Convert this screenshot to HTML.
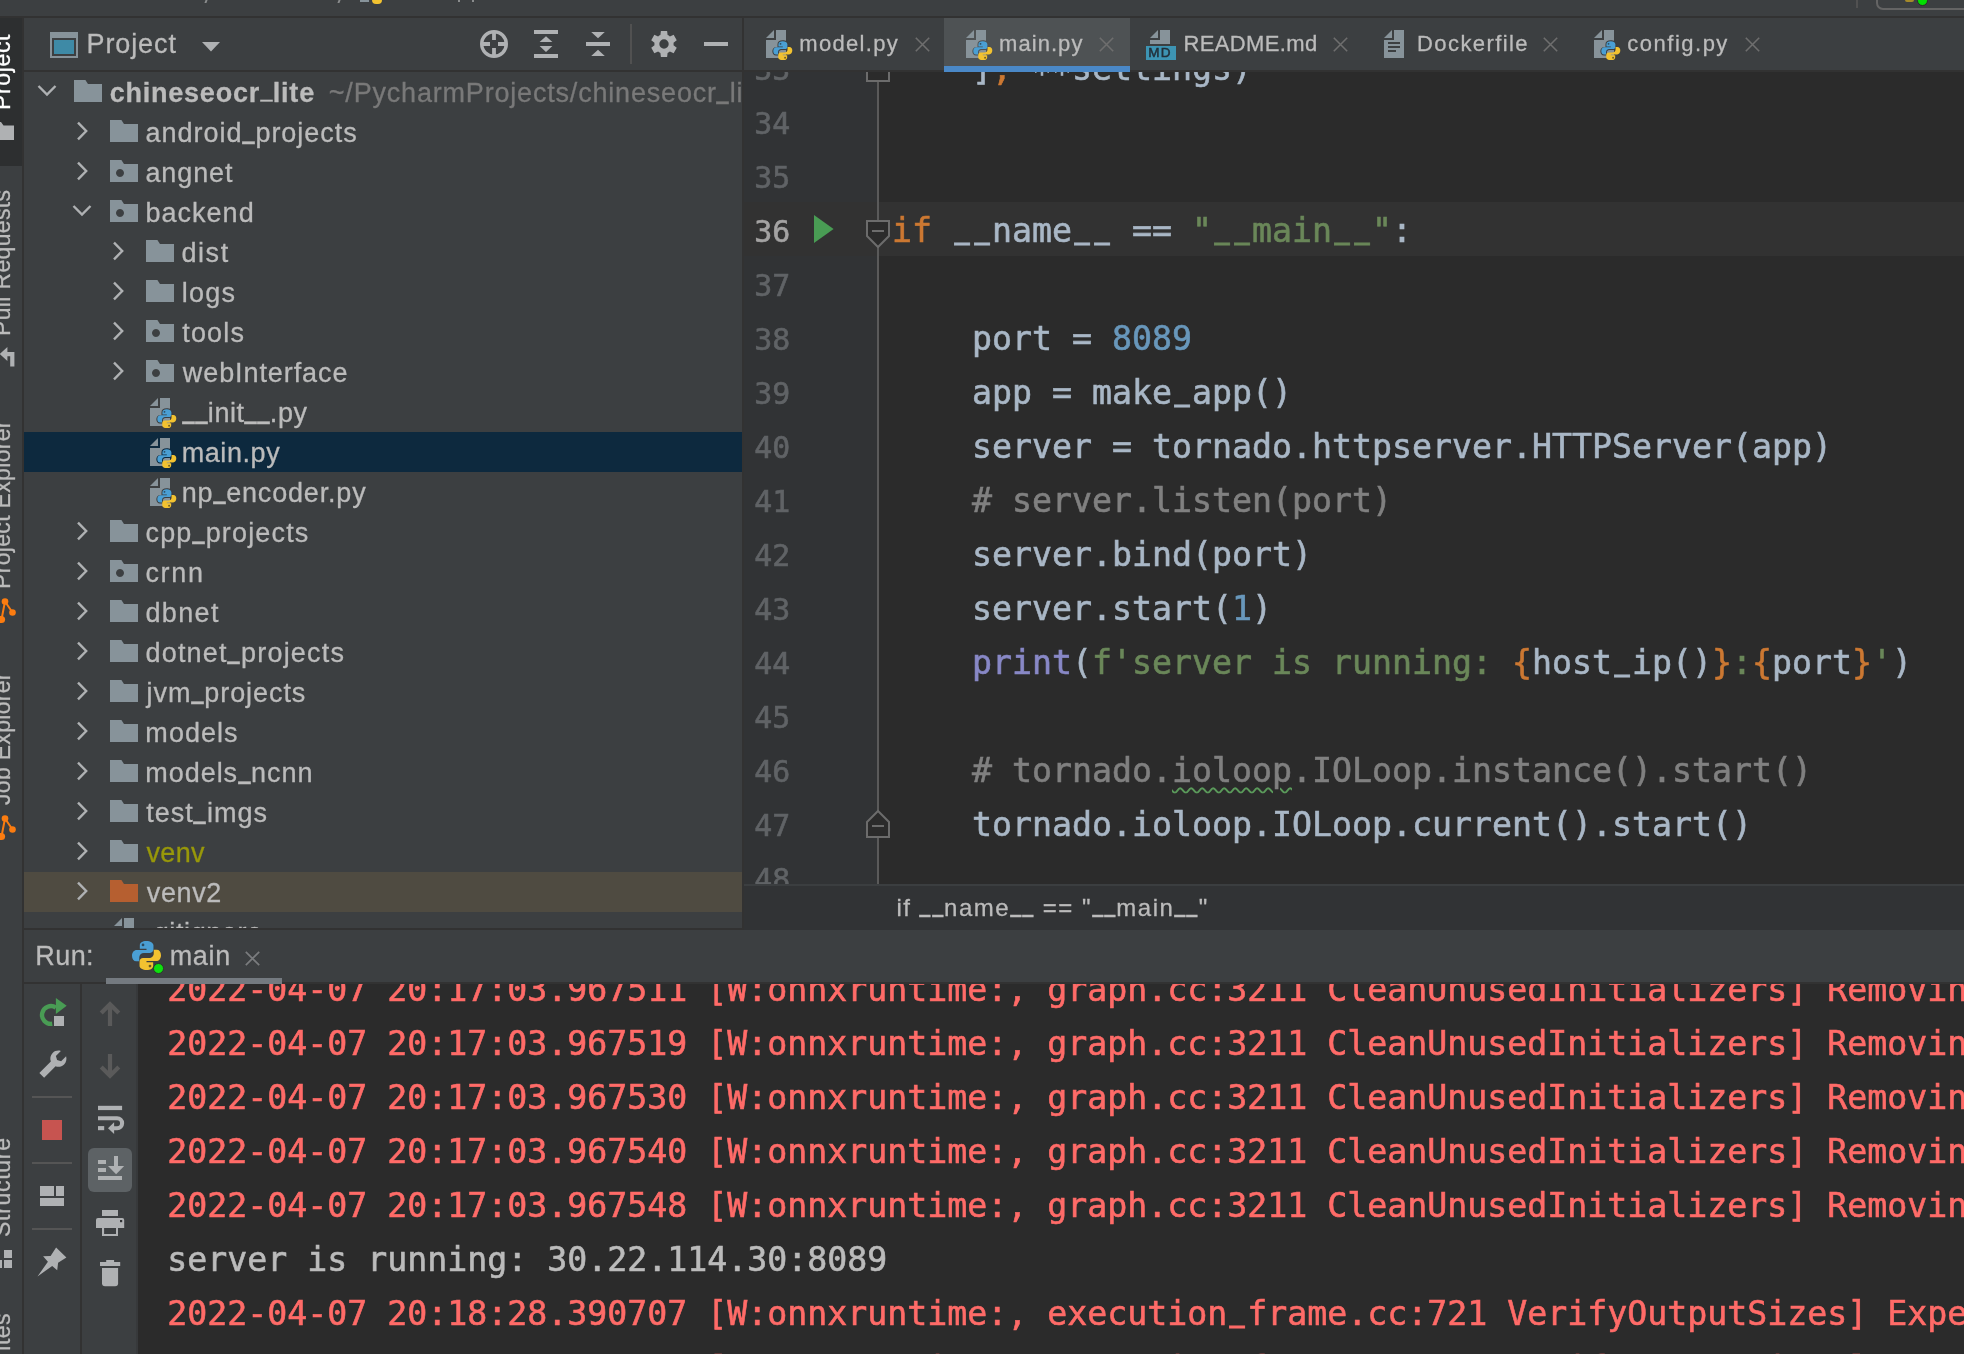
<!DOCTYPE html>
<html lang="en"><head><meta charset="utf-8"><title>chineseocr_lite – main.py</title>
<style>
html,body{margin:0;padding:0;background:#3c3f41;}
body{width:1964px;height:1354px;position:relative;overflow:hidden;}
#root{position:absolute;left:0;top:0;width:1964px;height:1354px;overflow:hidden;will-change:transform;}
.b{position:absolute;display:block;}
.t{position:absolute;white-space:pre;}
.clip{position:absolute;overflow:hidden;}
.u{display:inline-block;transform-origin:50% 100%;transform:translateY(-0.7px) scale(.78,1.5);}
.us{display:inline-block;transform-origin:50% 100%;transform:translateY(-2.5px) scale(.8,1.3);}
.as{display:inline-block;transform:translateY(5px);}
.s{font-family:"Liberation Sans","DejaVu Sans",sans-serif;-webkit-text-stroke:0.3px;}
.m{font-family:"DejaVu Sans Mono","Liberation Mono",monospace;-webkit-text-stroke:0.6px;}
</style></head><body><div id="root">
<div class="b" style="left:0px;top:0px;width:1964px;height:16px;background:#3c3f41;"></div>
<div class="b" style="left:0px;top:16px;width:1964px;height:2px;background:#323232;"></div>
<div class="b" style="left:205px;top:0px;width:2px;height:3px;background:#8a8c8d;transform:skewX(-20deg);"></div>
<div class="b" style="left:338px;top:0px;width:2px;height:3px;background:#8a8c8d;transform:skewX(-20deg);"></div>
<div class="b" style="left:360px;top:0px;width:9px;height:2px;background:#87939a;"></div>
<div class="b" style="left:371.5px;top:0px;width:10px;height:3.5px;background:#f2c230;border-radius:0 0 4px 4px;"></div>
<div class="b" style="left:458px;top:0px;width:2px;height:1.5px;background:#8a8c8d;"></div>
<div class="b" style="left:472px;top:0px;width:2px;height:2px;background:#8a8c8d;"></div>
<div class="b" style="left:1856px;top:0px;width:2px;height:8px;background:#515151;"></div>
<div class="b" style="left:1876px;top:-12px;width:120px;height:18px;border:2px solid #646464;border-radius:7px;"></div>
<div class="b" style="left:1905px;top:0px;width:9px;height:2px;background:#a58a2a;border-radius:0 0 5px 5px;"></div>
<div class="b" style="left:1917px;top:-5.5px;width:9px;height:9px;border-radius:50%;background:#00e000;border:1px solid #2b2b2b;"></div>
<div class="b" style="left:0px;top:18px;width:22px;height:148px;background:#2d2f30;"></div>
<div class="b" style="left:22px;top:18px;width:2px;height:1336px;background:#323232;"></div>
<div class="b" style="left:24px;top:70px;width:718px;height:2px;background:#323232;"></div>
<div class="b" style="left:742px;top:18px;width:2px;height:912px;background:#323232;"></div>
<svg class="b" style="left:50px;top:32px;" width="28" height="26" viewBox="0 0 28 26"><rect width="28" height="26" fill="#87939a"/><rect x="2" y="6" width="24" height="18" fill="#3c3f41"/><rect x="4" y="8" width="20" height="14" fill="#3e8aa6"/></svg>
<div class="t s" style="left:86.62px;top:27.14px;font-size:27px;line-height:35px;color:#bbbbbb;letter-spacing:0.875px;">Project</div>
<svg class="b" style="left:202px;top:42px;" width="18" height="10" viewBox="0 0 18 10"><path d="M0,0 H18 L9,9.5 Z" fill="#afb1b3"/></svg>
<div class="clip" style="left:24px;top:72px;width:718px;height:856px;">
<svg class="b" style="left:13px;top:11.5px;" width="20" height="14" viewBox="0 0 20 14"><path d="M1.5,2 L10,10.5 L18.5,2" fill="none" stroke="#afb1b3" stroke-width="2.4"/></svg>
<svg class="b" style="left:50px;top:8px;" width="28" height="22" viewBox="0 0 28 22"><path d="M0,22 H28 V4 H13.97 L11.39,0 H0 Z" fill="#87939a" fill-rule="evenodd"/></svg>
<div class="t s" style="left:85.70px;top:4.14px;font-size:27px;line-height:35px;color:#bbbbbb;font-weight:bold;letter-spacing:0.775px;">chineseocr<span class="us" style="margin:0 -1.50px">_</span>lite</div>
<svg class="b" style="left:52px;top:48.7px;" width="14" height="20" viewBox="0 0 14 20"><path d="M2,1.7 L10.2,10 L2,18.3" fill="none" stroke="#afb1b3" stroke-width="2.4"/></svg>
<svg class="b" style="left:86px;top:48px;" width="28" height="22" viewBox="0 0 28 22"><path d="M0,22 H28 V4 H13.97 L11.39,0 H0 Z" fill="#87939a" fill-rule="evenodd"/></svg>
<div class="t s" style="left:121.47px;top:44.14px;font-size:27px;line-height:35px;color:#bbbbbb;letter-spacing:0.978px;">android<span class="us" style="margin:0 -1.50px">_</span>projects</div>
<svg class="b" style="left:52px;top:88.7px;" width="14" height="20" viewBox="0 0 14 20"><path d="M2,1.7 L10.2,10 L2,18.3" fill="none" stroke="#afb1b3" stroke-width="2.4"/></svg>
<svg class="b" style="left:86px;top:88px;" width="28" height="22" viewBox="0 0 28 22"><path d="M0,22 H28 V4 H13.97 L11.39,0 H0 Z M10,9 a4,4 0 1,0 0.001,0 Z" fill="#87939a" fill-rule="evenodd"/></svg>
<div class="t s" style="left:121.47px;top:84.14px;font-size:27px;line-height:35px;color:#bbbbbb;letter-spacing:0.885px;">angnet</div>
<svg class="b" style="left:48px;top:131.5px;" width="20" height="14" viewBox="0 0 20 14"><path d="M1.5,2 L10,10.5 L18.5,2" fill="none" stroke="#afb1b3" stroke-width="2.4"/></svg>
<svg class="b" style="left:86px;top:128px;" width="28" height="22" viewBox="0 0 28 22"><path d="M0,22 H28 V4 H13.97 L11.39,0 H0 Z M10,9 a4,4 0 1,0 0.001,0 Z" fill="#87939a" fill-rule="evenodd"/></svg>
<div class="t s" style="left:121.47px;top:124.14px;font-size:27px;line-height:35px;color:#bbbbbb;letter-spacing:1.021px;">backend</div>
<svg class="b" style="left:88px;top:168.7px;" width="14" height="20" viewBox="0 0 14 20"><path d="M2,1.7 L10.2,10 L2,18.3" fill="none" stroke="#afb1b3" stroke-width="2.4"/></svg>
<svg class="b" style="left:122px;top:168px;" width="28" height="22" viewBox="0 0 28 22"><path d="M0,22 H28 V4 H13.97 L11.39,0 H0 Z" fill="#87939a" fill-rule="evenodd"/></svg>
<div class="t s" style="left:157.57px;top:164.14px;font-size:27px;line-height:35px;color:#bbbbbb;letter-spacing:1.517px;">dist</div>
<svg class="b" style="left:88px;top:208.7px;" width="14" height="20" viewBox="0 0 14 20"><path d="M2,1.7 L10.2,10 L2,18.3" fill="none" stroke="#afb1b3" stroke-width="2.4"/></svg>
<svg class="b" style="left:122px;top:208px;" width="28" height="22" viewBox="0 0 28 22"><path d="M0,22 H28 V4 H13.97 L11.39,0 H0 Z" fill="#87939a" fill-rule="evenodd"/></svg>
<div class="t s" style="left:157.75px;top:204.14px;font-size:27px;line-height:35px;color:#bbbbbb;letter-spacing:1.275px;">logs</div>
<svg class="b" style="left:88px;top:248.7px;" width="14" height="20" viewBox="0 0 14 20"><path d="M2,1.7 L10.2,10 L2,18.3" fill="none" stroke="#afb1b3" stroke-width="2.4"/></svg>
<svg class="b" style="left:122px;top:248px;" width="28" height="22" viewBox="0 0 28 22"><path d="M0,22 H28 V4 H13.97 L11.39,0 H0 Z M10,9 a4,4 0 1,0 0.001,0 Z" fill="#87939a" fill-rule="evenodd"/></svg>
<div class="t s" style="left:158.32px;top:244.14px;font-size:27px;line-height:35px;color:#bbbbbb;letter-spacing:1.137px;">tools</div>
<svg class="b" style="left:88px;top:288.7px;" width="14" height="20" viewBox="0 0 14 20"><path d="M2,1.7 L10.2,10 L2,18.3" fill="none" stroke="#afb1b3" stroke-width="2.4"/></svg>
<svg class="b" style="left:122px;top:288px;" width="28" height="22" viewBox="0 0 28 22"><path d="M0,22 H28 V4 H13.97 L11.39,0 H0 Z M10,9 a4,4 0 1,0 0.001,0 Z" fill="#87939a" fill-rule="evenodd"/></svg>
<div class="t s" style="left:158.82px;top:284.14px;font-size:27px;line-height:35px;color:#bbbbbb;letter-spacing:0.916px;">webInterface</div>
<svg class="b" style="left:122px;top:324px;" width="32" height="32" viewBox="0 0 32 32"><path d="M4,10 L12,2 V10 Z" fill="#87939a"/><path d="M14,2 H24 V30 H4 V12 H14 Z" fill="#87939a"/><g transform="translate(11.3,13.3) scale(0.95)">
<path d="M9.9,-1 C6.5,-1 4.4,0.6 4.4,3 V6.2 H2.6 C0.4,6.2 -1,8 -1,10.4 C-1,13 0.5,15 2.8,15 H6 V11.6 C6,10.2 7,9.2 8.4,9.2 H12.6 C14.4,9.2 15.8,7.8 15.8,6 V3 C15.8,0.6 13.2,-1 9.9,-1 Z" fill="#3c3f41"/>
<path d="M9.9,0 C7.2,0 5.4,1.2 5.4,3 V5.4 H10 V6.2 H3.3 C1.4,6.2 0,7.8 0,10.2 C0,12.6 1.2,14 3,14 H5 V11.4 C5,9.6 6.4,8.2 8.2,8.2 H12.4 C13.8,8.2 14.8,7.1 14.8,5.7 V3 C14.8,1.3 12.6,0 9.9,0 Z" fill="#4a9fd4"/>
<circle cx="7.6" cy="2.7" r="0.95" fill="#2d4a5e"/>
<path d="M10.1,20 C12.8,20 14.6,18.8 14.6,17 V14.6 H10 V13.8 H16.7 C18.6,13.8 20,12.2 20,9.8 C20,7.4 18.8,6 17,6 H15 V8.6 C15,10.4 13.6,11.8 11.8,11.8 H7.6 C6.2,11.8 5.2,12.9 5.2,14.3 V17 C5.2,18.7 7.4,20 10.1,20 Z" fill="#f2c230"/>
<circle cx="12.4" cy="17.3" r="0.95" fill="#6b5a1e"/>
</g></svg>
<div class="t s" style="left:158.60px;top:324.14px;font-size:27px;line-height:35px;color:#bbbbbb;letter-spacing:0.578px;"><span class="us" style="margin:0 -1.50px">_</span><span class="us" style="margin:0 -1.50px">_</span>init<span class="us" style="margin:0 -1.50px">_</span><span class="us" style="margin:0 -1.50px">_</span>.py</div>
<div class="b" style="left:0px;top:360px;width:718px;height:40px;background:#0d293e;"></div>
<svg class="b" style="left:122px;top:364px;" width="32" height="32" viewBox="0 0 32 32"><path d="M4,10 L12,2 V10 Z" fill="#87939a"/><path d="M14,2 H24 V30 H4 V12 H14 Z" fill="#87939a"/><g transform="translate(11.3,13.3) scale(0.95)">
<path d="M9.9,-1 C6.5,-1 4.4,0.6 4.4,3 V6.2 H2.6 C0.4,6.2 -1,8 -1,10.4 C-1,13 0.5,15 2.8,15 H6 V11.6 C6,10.2 7,9.2 8.4,9.2 H12.6 C14.4,9.2 15.8,7.8 15.8,6 V3 C15.8,0.6 13.2,-1 9.9,-1 Z" fill="#0d293e"/>
<path d="M9.9,0 C7.2,0 5.4,1.2 5.4,3 V5.4 H10 V6.2 H3.3 C1.4,6.2 0,7.8 0,10.2 C0,12.6 1.2,14 3,14 H5 V11.4 C5,9.6 6.4,8.2 8.2,8.2 H12.4 C13.8,8.2 14.8,7.1 14.8,5.7 V3 C14.8,1.3 12.6,0 9.9,0 Z" fill="#4a9fd4"/>
<circle cx="7.6" cy="2.7" r="0.95" fill="#2d4a5e"/>
<path d="M10.1,20 C12.8,20 14.6,18.8 14.6,17 V14.6 H10 V13.8 H16.7 C18.6,13.8 20,12.2 20,9.8 C20,7.4 18.8,6 17,6 H15 V8.6 C15,10.4 13.6,11.8 11.8,11.8 H7.6 C6.2,11.8 5.2,12.9 5.2,14.3 V17 C5.2,18.7 7.4,20 10.1,20 Z" fill="#f2c230"/>
<circle cx="12.4" cy="17.3" r="0.95" fill="#6b5a1e"/>
</g></svg>
<div class="t s" style="left:157.65px;top:364.14px;font-size:27px;line-height:35px;color:#bbbbbb;letter-spacing:0.592px;">main.py</div>
<svg class="b" style="left:122px;top:404px;" width="32" height="32" viewBox="0 0 32 32"><path d="M4,10 L12,2 V10 Z" fill="#87939a"/><path d="M14,2 H24 V30 H4 V12 H14 Z" fill="#87939a"/><g transform="translate(11.3,13.3) scale(0.95)">
<path d="M9.9,-1 C6.5,-1 4.4,0.6 4.4,3 V6.2 H2.6 C0.4,6.2 -1,8 -1,10.4 C-1,13 0.5,15 2.8,15 H6 V11.6 C6,10.2 7,9.2 8.4,9.2 H12.6 C14.4,9.2 15.8,7.8 15.8,6 V3 C15.8,0.6 13.2,-1 9.9,-1 Z" fill="#3c3f41"/>
<path d="M9.9,0 C7.2,0 5.4,1.2 5.4,3 V5.4 H10 V6.2 H3.3 C1.4,6.2 0,7.8 0,10.2 C0,12.6 1.2,14 3,14 H5 V11.4 C5,9.6 6.4,8.2 8.2,8.2 H12.4 C13.8,8.2 14.8,7.1 14.8,5.7 V3 C14.8,1.3 12.6,0 9.9,0 Z" fill="#4a9fd4"/>
<circle cx="7.6" cy="2.7" r="0.95" fill="#2d4a5e"/>
<path d="M10.1,20 C12.8,20 14.6,18.8 14.6,17 V14.6 H10 V13.8 H16.7 C18.6,13.8 20,12.2 20,9.8 C20,7.4 18.8,6 17,6 H15 V8.6 C15,10.4 13.6,11.8 11.8,11.8 H7.6 C6.2,11.8 5.2,12.9 5.2,14.3 V17 C5.2,18.7 7.4,20 10.1,20 Z" fill="#f2c230"/>
<circle cx="12.4" cy="17.3" r="0.95" fill="#6b5a1e"/>
</g></svg>
<div class="t s" style="left:157.65px;top:404.14px;font-size:27px;line-height:35px;color:#bbbbbb;letter-spacing:0.827px;">np<span class="us" style="margin:0 -1.50px">_</span>encoder.py</div>
<svg class="b" style="left:52px;top:448.7px;" width="14" height="20" viewBox="0 0 14 20"><path d="M2,1.7 L10.2,10 L2,18.3" fill="none" stroke="#afb1b3" stroke-width="2.4"/></svg>
<svg class="b" style="left:86px;top:448px;" width="28" height="22" viewBox="0 0 28 22"><path d="M0,22 H28 V4 H13.97 L11.39,0 H0 Z" fill="#87939a" fill-rule="evenodd"/></svg>
<div class="t s" style="left:121.47px;top:444.14px;font-size:27px;line-height:35px;color:#bbbbbb;letter-spacing:1.162px;">cpp<span class="us" style="margin:0 -1.50px">_</span>projects</div>
<svg class="b" style="left:52px;top:488.7px;" width="14" height="20" viewBox="0 0 14 20"><path d="M2,1.7 L10.2,10 L2,18.3" fill="none" stroke="#afb1b3" stroke-width="2.4"/></svg>
<svg class="b" style="left:86px;top:488px;" width="28" height="22" viewBox="0 0 28 22"><path d="M0,22 H28 V4 H13.97 L11.39,0 H0 Z M10,9 a4,4 0 1,0 0.001,0 Z" fill="#87939a" fill-rule="evenodd"/></svg>
<div class="t s" style="left:121.47px;top:484.14px;font-size:27px;line-height:35px;color:#bbbbbb;letter-spacing:1.650px;">crnn</div>
<svg class="b" style="left:52px;top:528.7px;" width="14" height="20" viewBox="0 0 14 20"><path d="M2,1.7 L10.2,10 L2,18.3" fill="none" stroke="#afb1b3" stroke-width="2.4"/></svg>
<svg class="b" style="left:86px;top:528px;" width="28" height="22" viewBox="0 0 28 22"><path d="M0,22 H28 V4 H13.97 L11.39,0 H0 Z" fill="#87939a" fill-rule="evenodd"/></svg>
<div class="t s" style="left:121.47px;top:524.14px;font-size:27px;line-height:35px;color:#bbbbbb;letter-spacing:1.356px;">dbnet</div>
<svg class="b" style="left:52px;top:568.7px;" width="14" height="20" viewBox="0 0 14 20"><path d="M2,1.7 L10.2,10 L2,18.3" fill="none" stroke="#afb1b3" stroke-width="2.4"/></svg>
<svg class="b" style="left:86px;top:568px;" width="28" height="22" viewBox="0 0 28 22"><path d="M0,22 H28 V4 H13.97 L11.39,0 H0 Z" fill="#87939a" fill-rule="evenodd"/></svg>
<div class="t s" style="left:121.47px;top:564.14px;font-size:27px;line-height:35px;color:#bbbbbb;letter-spacing:1.206px;">dotnet<span class="us" style="margin:0 -1.50px">_</span>projects</div>
<svg class="b" style="left:52px;top:608.7px;" width="14" height="20" viewBox="0 0 14 20"><path d="M2,1.7 L10.2,10 L2,18.3" fill="none" stroke="#afb1b3" stroke-width="2.4"/></svg>
<svg class="b" style="left:86px;top:608px;" width="28" height="22" viewBox="0 0 28 22"><path d="M0,22 H28 V4 H13.97 L11.39,0 H0 Z" fill="#87939a" fill-rule="evenodd"/></svg>
<div class="t s" style="left:122.55px;top:604.14px;font-size:27px;line-height:35px;color:#bbbbbb;letter-spacing:0.930px;">jvm<span class="us" style="margin:0 -1.50px">_</span>projects</div>
<svg class="b" style="left:52px;top:648.7px;" width="14" height="20" viewBox="0 0 14 20"><path d="M2,1.7 L10.2,10 L2,18.3" fill="none" stroke="#afb1b3" stroke-width="2.4"/></svg>
<svg class="b" style="left:86px;top:648px;" width="28" height="22" viewBox="0 0 28 22"><path d="M0,22 H28 V4 H13.97 L11.39,0 H0 Z" fill="#87939a" fill-rule="evenodd"/></svg>
<div class="t s" style="left:121.35px;top:644.14px;font-size:27px;line-height:35px;color:#bbbbbb;letter-spacing:1.045px;">models</div>
<svg class="b" style="left:52px;top:688.7px;" width="14" height="20" viewBox="0 0 14 20"><path d="M2,1.7 L10.2,10 L2,18.3" fill="none" stroke="#afb1b3" stroke-width="2.4"/></svg>
<svg class="b" style="left:86px;top:688px;" width="28" height="22" viewBox="0 0 28 22"><path d="M0,22 H28 V4 H13.97 L11.39,0 H0 Z" fill="#87939a" fill-rule="evenodd"/></svg>
<div class="t s" style="left:121.35px;top:684.14px;font-size:27px;line-height:35px;color:#bbbbbb;letter-spacing:0.945px;">models<span class="us" style="margin:0 -1.50px">_</span>ncnn</div>
<svg class="b" style="left:52px;top:728.7px;" width="14" height="20" viewBox="0 0 14 20"><path d="M2,1.7 L10.2,10 L2,18.3" fill="none" stroke="#afb1b3" stroke-width="2.4"/></svg>
<svg class="b" style="left:86px;top:728px;" width="28" height="22" viewBox="0 0 28 22"><path d="M0,22 H28 V4 H13.97 L11.39,0 H0 Z" fill="#87939a" fill-rule="evenodd"/></svg>
<div class="t s" style="left:122.22px;top:724.14px;font-size:27px;line-height:35px;color:#bbbbbb;letter-spacing:1.019px;">test<span class="us" style="margin:0 -1.50px">_</span>imgs</div>
<svg class="b" style="left:52px;top:768.7px;" width="14" height="20" viewBox="0 0 14 20"><path d="M2,1.7 L10.2,10 L2,18.3" fill="none" stroke="#afb1b3" stroke-width="2.4"/></svg>
<svg class="b" style="left:86px;top:768px;" width="28" height="22" viewBox="0 0 28 22"><path d="M0,22 H28 V4 H13.97 L11.39,0 H0 Z" fill="#87939a" fill-rule="evenodd"/></svg>
<div class="t s" style="left:122.60px;top:764.14px;font-size:27px;line-height:35px;color:#98980a;letter-spacing:0.267px;">venv</div>
<div class="b" style="left:0px;top:800px;width:718px;height:40px;background:#4f4b41;"></div>
<svg class="b" style="left:52px;top:808.7px;" width="14" height="20" viewBox="0 0 14 20"><path d="M2,1.7 L10.2,10 L2,18.3" fill="none" stroke="#afb1b3" stroke-width="2.4"/></svg>
<svg class="b" style="left:86px;top:808px;" width="28" height="22" viewBox="0 0 28 22"><path d="M0,22 H28 V4 H13.97 L11.39,0 H0 Z" fill="#b65f30" fill-rule="evenodd"/></svg>
<div class="t s" style="left:122.80px;top:804.14px;font-size:27px;line-height:35px;color:#bbbbbb;letter-spacing:0.613px;">venv2</div>
<div class="t s" style="left:304.77px;top:4.14px;font-size:27px;line-height:35px;color:#797979;letter-spacing:0.810px;">~/PycharmProjects/chineseocr<span class="us" style="margin:0 -1.50px">_</span>lite</div>
<svg class="b" style="left:86px;top:844px;" width="32" height="32" viewBox="0 0 32 32"><path d="M4,10 L12,2 V10 Z" fill="#87939a"/><path d="M14,2 H24 V30 H4 V12 H14 Z" fill="#87939a"/></svg>
<div class="t s" style="left:121.62px;top:844.14px;font-size:27px;line-height:35px;color:#bbbbbb;letter-spacing:0.600px;">.gitignore</div>
</div>
<div class="b" style="left:24px;top:928px;width:718px;height:2px;background:#323232;"></div>
<svg class="b" style="left:480px;top:30px;" width="28" height="28" viewBox="0 0 28 28"><circle cx="14" cy="14" r="12.3" fill="none" stroke="#afb1b3" stroke-width="3.4"/><path d="M14,1 V10 M14,18 V27 M1,14 H10 M18,14 H27" stroke="#afb1b3" stroke-width="3.8"/></svg>
<svg class="b" style="left:534px;top:30px;" width="24" height="28" viewBox="0 0 24 28"><rect x="0" y="0" width="24" height="4" fill="#afb1b3"/><rect x="0" y="24" width="24" height="4" fill="#afb1b3"/><path d="M12,6.2 L18.4,12 H5.6 Z M12,22 L18.4,16 H5.6 Z" fill="#afb1b3"/></svg>
<svg class="b" style="left:586px;top:30px;" width="24" height="28" viewBox="0 0 24 28"><rect x="0" y="12" width="24" height="4" fill="#afb1b3"/><path d="M12,8.2 L18.8,2 H5.2 Z M12,19.8 L18.8,26 H5.2 Z" fill="#afb1b3"/></svg>
<div class="b" style="left:630px;top:24px;width:2px;height:40px;background:#515151;"></div>
<svg class="b" style="left:650px;top:30px;" width="28" height="28" viewBox="0 0 28 28"><path d="M10.40,5.10 L10.40,5.10 L10.90,1.07 L17.10,1.07 L17.60,5.10 A9.60,9.60 0 0 1 19.91,6.44 L19.91,6.44 L23.65,4.84 L26.75,10.22 L23.51,12.66 A9.60,9.60 0 0 1 23.51,15.34 L23.51,15.34 L26.75,17.78 L23.65,23.16 L19.91,21.56 A9.60,9.60 0 0 1 17.60,22.90 L17.60,22.90 L17.10,26.93 L10.90,26.93 L10.40,22.90 A9.60,9.60 0 0 1 8.09,21.56 L8.09,21.56 L4.35,23.16 L1.25,17.78 L4.49,15.34 A9.60,9.60 0 0 1 4.49,12.66 L4.49,12.66 L1.25,10.22 L4.35,4.84 L8.09,6.44 A9.60,9.60 0 0 1 10.40,5.10 Z M9.30,14.00 a4.70,4.70 0 1,0 9.40,0 a4.70,4.70 0 1,0 -9.40,0 Z" fill="#afb1b3" fill-rule="evenodd"/></svg>
<div class="b" style="left:704px;top:42px;width:24px;height:4px;background:#afb1b3;"></div>
<div class="clip" style="left:0;top:18px;width:22px;height:1336px;">
<div class="t s" style="left:-12.77px;top:91.88px;font-size:23px;line-height:30px;color:#ffffff;transform-origin:0 0;transform:rotate(-90deg);letter-spacing:0.646px;">Project</div>
<svg class="b" style="left:-14px;top:104px;" width="28" height="18" viewBox="0 0 28 18"><path d="M0,18 H28 V3.5 H17.5 L15,0 H0 Z" fill="#afb1b3"/></svg>
<div class="t s" style="left:-12.87px;top:318.18px;font-size:23px;line-height:30px;color:#bbbbbb;transform-origin:0 0;transform:rotate(-90deg);letter-spacing:0.338px;">Pull Requests</div>
<svg class="b" style="left:0px;top:329px;" width="15" height="21" viewBox="0 0 15 21"><path d="M-0.4,7 L7.4,0 V5 H14.4 V19.6 H10.2 V9.2 H7.4 V14 Z" fill="#afb1b3"/></svg>
<div class="t s" style="left:-12.87px;top:571.48px;font-size:23px;line-height:30px;color:#bbbbbb;transform-origin:0 0;transform:rotate(-90deg);letter-spacing:0.327px;">Project Explorer</div>
<svg class="b" style="left:-6px;top:579px;" width="24" height="30" viewBox="0 0 24 30"><path d="M11,4.5 L18.5,15.5 M11,4.5 L7.5,22.5" stroke="#fb7c10" stroke-width="2" fill="none"/><circle cx="11" cy="4.5" r="3.3" fill="#fb7c10"/><circle cx="18.5" cy="15.5" r="3.3" fill="#fb7c10"/><circle cx="7.5" cy="22.5" r="3.6" fill="#fb7c10"/></svg>
<div class="t s" style="left:-12.87px;top:786.85px;font-size:23px;line-height:30px;color:#bbbbbb;transform-origin:0 0;transform:rotate(-90deg);letter-spacing:0.307px;">Job Explorer</div>
<svg class="b" style="left:-6px;top:795.5px;" width="24" height="30" viewBox="0 0 24 30"><path d="M11,4.5 L18.5,15.5 M11,4.5 L7.5,22.5" stroke="#fb7c10" stroke-width="2" fill="none"/><circle cx="11" cy="4.5" r="3.3" fill="#fb7c10"/><circle cx="18.5" cy="15.5" r="3.3" fill="#fb7c10"/><circle cx="7.5" cy="22.5" r="3.6" fill="#fb7c10"/></svg>
<div class="t s" style="left:-12.87px;top:1219.00px;font-size:23px;line-height:30px;color:#bbbbbb;transform-origin:0 0;transform:rotate(-90deg);letter-spacing:0.703px;">Structure</div>
<svg class="b" style="left:0px;top:1232px;" width="12" height="18" viewBox="0 0 12 18"><rect x="4" y="0" width="8" height="8" fill="#afb1b3"/><rect x="4" y="10" width="8" height="8" fill="#afb1b3"/><rect x="-6" y="10" width="8" height="8" fill="#afb1b3"/></svg>
<div class="t s" style="left:-12.87px;top:1393.88px;font-size:23px;line-height:30px;color:#bbbbbb;transform-origin:0 0;transform:rotate(-90deg);letter-spacing:0.500px;">Favorites</div>
</div>
<div class="b" style="left:944px;top:18px;width:186px;height:52px;background:#4e5254;"></div>
<div class="b" style="left:744px;top:70px;width:1220px;height:2px;background:#323232;"></div>
<div class="b" style="left:944px;top:66px;width:186px;height:6px;background:#4a88c7;"></div>
<svg class="b" style="left:762px;top:28px;" width="32" height="32" viewBox="0 0 32 32"><path d="M4,10 L12,2 V10 Z" fill="#87939a"/><path d="M14,2 H24 V30 H4 V12 H14 Z" fill="#87939a"/><g transform="translate(11.3,13.3) scale(0.95)">
<path d="M9.9,-1 C6.5,-1 4.4,0.6 4.4,3 V6.2 H2.6 C0.4,6.2 -1,8 -1,10.4 C-1,13 0.5,15 2.8,15 H6 V11.6 C6,10.2 7,9.2 8.4,9.2 H12.6 C14.4,9.2 15.8,7.8 15.8,6 V3 C15.8,0.6 13.2,-1 9.9,-1 Z" fill="#3c3f41"/>
<path d="M9.9,0 C7.2,0 5.4,1.2 5.4,3 V5.4 H10 V6.2 H3.3 C1.4,6.2 0,7.8 0,10.2 C0,12.6 1.2,14 3,14 H5 V11.4 C5,9.6 6.4,8.2 8.2,8.2 H12.4 C13.8,8.2 14.8,7.1 14.8,5.7 V3 C14.8,1.3 12.6,0 9.9,0 Z" fill="#4a9fd4"/>
<circle cx="7.6" cy="2.7" r="0.95" fill="#2d4a5e"/>
<path d="M10.1,20 C12.8,20 14.6,18.8 14.6,17 V14.6 H10 V13.8 H16.7 C18.6,13.8 20,12.2 20,9.8 C20,7.4 18.8,6 17,6 H15 V8.6 C15,10.4 13.6,11.8 11.8,11.8 H7.6 C6.2,11.8 5.2,12.9 5.2,14.3 V17 C5.2,18.7 7.4,20 10.1,20 Z" fill="#f2c230"/>
<circle cx="12.4" cy="17.3" r="0.95" fill="#6b5a1e"/>
</g></svg>
<div class="t s" style="left:799.23px;top:29.37px;font-size:22px;line-height:29px;color:#bbbbbb;letter-spacing:1.332px;">model.py</div>
<svg class="b" style="left:914.5px;top:37px;" width="15" height="15" viewBox="0 0 15 15"><path d="M0.8,0.8 L14.2,14.2 M14.2,0.8 L0.8,14.2" stroke="#6e6e6e" stroke-width="1.6" fill="none"/></svg>
<svg class="b" style="left:962px;top:28px;" width="32" height="32" viewBox="0 0 32 32"><path d="M4,10 L12,2 V10 Z" fill="#87939a"/><path d="M14,2 H24 V30 H4 V12 H14 Z" fill="#87939a"/><g transform="translate(11.3,13.3) scale(0.95)">
<path d="M9.9,-1 C6.5,-1 4.4,0.6 4.4,3 V6.2 H2.6 C0.4,6.2 -1,8 -1,10.4 C-1,13 0.5,15 2.8,15 H6 V11.6 C6,10.2 7,9.2 8.4,9.2 H12.6 C14.4,9.2 15.8,7.8 15.8,6 V3 C15.8,0.6 13.2,-1 9.9,-1 Z" fill="#4e5254"/>
<path d="M9.9,0 C7.2,0 5.4,1.2 5.4,3 V5.4 H10 V6.2 H3.3 C1.4,6.2 0,7.8 0,10.2 C0,12.6 1.2,14 3,14 H5 V11.4 C5,9.6 6.4,8.2 8.2,8.2 H12.4 C13.8,8.2 14.8,7.1 14.8,5.7 V3 C14.8,1.3 12.6,0 9.9,0 Z" fill="#4a9fd4"/>
<circle cx="7.6" cy="2.7" r="0.95" fill="#2d4a5e"/>
<path d="M10.1,20 C12.8,20 14.6,18.8 14.6,17 V14.6 H10 V13.8 H16.7 C18.6,13.8 20,12.2 20,9.8 C20,7.4 18.8,6 17,6 H15 V8.6 C15,10.4 13.6,11.8 11.8,11.8 H7.6 C6.2,11.8 5.2,12.9 5.2,14.3 V17 C5.2,18.7 7.4,20 10.1,20 Z" fill="#f2c230"/>
<circle cx="12.4" cy="17.3" r="0.95" fill="#6b5a1e"/>
</g></svg>
<div class="t s" style="left:999.02px;top:29.37px;font-size:22px;line-height:29px;color:#bbbbbb;letter-spacing:1.062px;">main.py</div>
<svg class="b" style="left:1098.5px;top:37px;" width="15" height="15" viewBox="0 0 15 15"><path d="M0.8,0.8 L14.2,14.2 M14.2,0.8 L0.8,14.2" stroke="#6e6e6e" stroke-width="1.6" fill="none"/></svg>
<svg class="b" style="left:1144px;top:28px;" width="32" height="32" viewBox="0 0 32 32"><path d="M6,10 L14,2 V10 Z" fill="#87939a"/><path d="M16,2 H26 V16 H6 V12 H16 Z" fill="#87939a"/><rect x="2" y="18" width="30" height="14" fill="#3d94b3"/></svg>
<div class="t s" style="left:1148.20px;top:43.92px;font-size:13.5px;line-height:18px;color:#22303a;letter-spacing:1.425px;-webkit-text-stroke:0.5px;">MD</div>
<div class="t s" style="left:1183.45px;top:29.37px;font-size:22px;line-height:29px;color:#bbbbbb;letter-spacing:0.381px;">README.md</div>
<svg class="b" style="left:1332.5px;top:37px;" width="15" height="15" viewBox="0 0 15 15"><path d="M0.8,0.8 L14.2,14.2 M14.2,0.8 L0.8,14.2" stroke="#6e6e6e" stroke-width="1.6" fill="none"/></svg>
<svg class="b" style="left:1378px;top:28px;" width="32" height="32" viewBox="0 0 32 32"><path d="M6,10 L14,2 V10 Z" fill="#87939a"/><path d="M16,2 H26 V30 H6 V12 H16 Z" fill="#87939a"/><path d="M10,15 H22 M10,19 H22 M10,23 H18" stroke="#3c3f41" stroke-width="2"/></svg>
<div class="t s" style="left:1417.05px;top:29.37px;font-size:22px;line-height:29px;color:#bbbbbb;letter-spacing:1.417px;">Dockerfile</div>
<svg class="b" style="left:1542.5px;top:37px;" width="15" height="15" viewBox="0 0 15 15"><path d="M0.8,0.8 L14.2,14.2 M14.2,0.8 L0.8,14.2" stroke="#6e6e6e" stroke-width="1.6" fill="none"/></svg>
<svg class="b" style="left:1590px;top:28px;" width="32" height="32" viewBox="0 0 32 32"><path d="M4,10 L12,2 V10 Z" fill="#87939a"/><path d="M14,2 H24 V30 H4 V12 H14 Z" fill="#87939a"/><g transform="translate(11.3,13.3) scale(0.95)">
<path d="M9.9,-1 C6.5,-1 4.4,0.6 4.4,3 V6.2 H2.6 C0.4,6.2 -1,8 -1,10.4 C-1,13 0.5,15 2.8,15 H6 V11.6 C6,10.2 7,9.2 8.4,9.2 H12.6 C14.4,9.2 15.8,7.8 15.8,6 V3 C15.8,0.6 13.2,-1 9.9,-1 Z" fill="#3c3f41"/>
<path d="M9.9,0 C7.2,0 5.4,1.2 5.4,3 V5.4 H10 V6.2 H3.3 C1.4,6.2 0,7.8 0,10.2 C0,12.6 1.2,14 3,14 H5 V11.4 C5,9.6 6.4,8.2 8.2,8.2 H12.4 C13.8,8.2 14.8,7.1 14.8,5.7 V3 C14.8,1.3 12.6,0 9.9,0 Z" fill="#4a9fd4"/>
<circle cx="7.6" cy="2.7" r="0.95" fill="#2d4a5e"/>
<path d="M10.1,20 C12.8,20 14.6,18.8 14.6,17 V14.6 H10 V13.8 H16.7 C18.6,13.8 20,12.2 20,9.8 C20,7.4 18.8,6 17,6 H15 V8.6 C15,10.4 13.6,11.8 11.8,11.8 H7.6 C6.2,11.8 5.2,12.9 5.2,14.3 V17 C5.2,18.7 7.4,20 10.1,20 Z" fill="#f2c230"/>
<circle cx="12.4" cy="17.3" r="0.95" fill="#6b5a1e"/>
</g></svg>
<div class="t s" style="left:1627.33px;top:29.37px;font-size:22px;line-height:29px;color:#bbbbbb;letter-spacing:1.497px;">config.py</div>
<svg class="b" style="left:1744.5px;top:37px;" width="15" height="15" viewBox="0 0 15 15"><path d="M0.8,0.8 L14.2,14.2 M14.2,0.8 L0.8,14.2" stroke="#6e6e6e" stroke-width="1.6" fill="none"/></svg>
<div class="b" style="left:744px;top:72px;width:1220px;height:812px;background:#2b2b2b;"></div>
<div class="b" style="left:744px;top:72px;width:133px;height:812px;background:#313335;"></div>
<div class="b" style="left:877px;top:72px;width:2px;height:812px;background:#5a5a5a;"></div>
<div class="b" style="left:879px;top:202px;width:1085px;height:54px;background:#323232;"></div>
<div class="b" style="left:744px;top:202px;width:133px;height:54px;background:#323232;"></div>
<div class="clip" style="left:744px;top:72px;width:1220px;height:812px;">
<div class="t m" style="left:148px;top:-30.50px;font-size:33.22px;line-height:54px;"><span style="color:#a9b7c6;">    ]</span><span style="color:#cc7832;">,</span><span style="color:#a9b7c6;"> <span class="as">*</span><span class="as">*</span>settings)</span></div>
<div class="t m" style="left:148px;top:131.50px;font-size:33.22px;line-height:54px;"><span style="color:#cc7832;">if</span><span style="color:#a9b7c6;"> <span class="u">_</span><span class="u">_</span>name<span class="u">_</span><span class="u">_</span> == </span><span style="color:#6a8759;">"<span class="u">_</span><span class="u">_</span>main<span class="u">_</span><span class="u">_</span>"</span><span style="color:#a9b7c6;">:</span></div>
<div class="t m" style="left:148px;top:239.50px;font-size:33.22px;line-height:54px;"><span style="color:#a9b7c6;">    port = </span><span style="color:#6897bb;">8089</span></div>
<div class="t m" style="left:148px;top:293.50px;font-size:33.22px;line-height:54px;"><span style="color:#a9b7c6;">    app = make<span class="u">_</span>app()</span></div>
<div class="t m" style="left:148px;top:347.50px;font-size:33.22px;line-height:54px;"><span style="color:#a9b7c6;">    server = tornado.httpserver.HTTPServer(app)</span></div>
<div class="t m" style="left:148px;top:401.50px;font-size:33.22px;line-height:54px;"><span style="color:#808080;">    # server.listen(port)</span></div>
<div class="t m" style="left:148px;top:455.50px;font-size:33.22px;line-height:54px;"><span style="color:#a9b7c6;">    server.bind(port)</span></div>
<div class="t m" style="left:148px;top:509.50px;font-size:33.22px;line-height:54px;"><span style="color:#a9b7c6;">    server.start(</span><span style="color:#6897bb;">1</span><span style="color:#a9b7c6;">)</span></div>
<div class="t m" style="left:148px;top:563.50px;font-size:33.22px;line-height:54px;"><span style="color:#a9b7c6;">    </span><span style="color:#8888c6;">print</span><span style="color:#a9b7c6;">(</span><span style="color:#6a8759;">f'server is running: </span><span style="color:#cc7832;">{</span><span style="color:#a9b7c6;">host<span class="u">_</span>ip()</span><span style="color:#cc7832;">}</span><span style="color:#6a8759;">:</span><span style="color:#cc7832;">{</span><span style="color:#a9b7c6;">port</span><span style="color:#cc7832;">}</span><span style="color:#6a8759;">'</span><span style="color:#a9b7c6;">)</span></div>
<div class="t m" style="left:148px;top:671.50px;font-size:33.22px;line-height:54px;"><span style="color:#808080;">    # tornado.</span><span style="color:#808080;text-decoration:underline wavy #5a9a5a 1.5px;text-underline-offset:5px;">ioloop</span><span style="color:#808080;">.IOLoop.instance().start()</span></div>
<div class="t m" style="left:148px;top:725.50px;font-size:33.22px;line-height:54px;"><span style="color:#a9b7c6;">    tornado.ioloop.IOLoop.current().start()</span></div>
<div class="t m" style="left:10.199999999999955px;top:-29.35px;font-size:29.9px;line-height:54px;"><span style="color:#606366;">33</span></div>
<div class="t m" style="left:10.199999999999955px;top:24.65px;font-size:29.9px;line-height:54px;"><span style="color:#606366;">34</span></div>
<div class="t m" style="left:10.199999999999955px;top:78.65px;font-size:29.9px;line-height:54px;"><span style="color:#606366;">35</span></div>
<div class="t m" style="left:10.199999999999955px;top:132.65px;font-size:29.9px;line-height:54px;"><span style="color:#a4a3a3;">36</span></div>
<div class="t m" style="left:10.199999999999955px;top:186.65px;font-size:29.9px;line-height:54px;"><span style="color:#606366;">37</span></div>
<div class="t m" style="left:10.199999999999955px;top:240.65px;font-size:29.9px;line-height:54px;"><span style="color:#606366;">38</span></div>
<div class="t m" style="left:10.199999999999955px;top:294.65px;font-size:29.9px;line-height:54px;"><span style="color:#606366;">39</span></div>
<div class="t m" style="left:10.199999999999955px;top:348.65px;font-size:29.9px;line-height:54px;"><span style="color:#606366;">40</span></div>
<div class="t m" style="left:10.199999999999955px;top:402.65px;font-size:29.9px;line-height:54px;"><span style="color:#606366;">41</span></div>
<div class="t m" style="left:10.199999999999955px;top:456.65px;font-size:29.9px;line-height:54px;"><span style="color:#606366;">42</span></div>
<div class="t m" style="left:10.199999999999955px;top:510.65px;font-size:29.9px;line-height:54px;"><span style="color:#606366;">43</span></div>
<div class="t m" style="left:10.199999999999955px;top:564.65px;font-size:29.9px;line-height:54px;"><span style="color:#606366;">44</span></div>
<div class="t m" style="left:10.199999999999955px;top:618.65px;font-size:29.9px;line-height:54px;"><span style="color:#606366;">45</span></div>
<div class="t m" style="left:10.199999999999955px;top:672.65px;font-size:29.9px;line-height:54px;"><span style="color:#606366;">46</span></div>
<div class="t m" style="left:10.199999999999955px;top:726.65px;font-size:29.9px;line-height:54px;"><span style="color:#606366;">47</span></div>
<div class="t m" style="left:10.199999999999955px;top:780.65px;font-size:29.9px;line-height:54px;"><span style="color:#606366;">48</span></div>
</div>
<svg class="b" style="left:814px;top:215px;" width="20" height="28" viewBox="0 0 20 28"><path d="M0,0 L19.6,14 L0,28 Z" fill="#499c54"/></svg>
<svg class="b" style="left:865px;top:219px;" width="26" height="30" viewBox="0 0 26 30"><path d="M2,2 H24 V17 L13,28 L2,17 Z" fill="#2b2b2b" stroke="#6c6c6c" stroke-width="2"/><path d="M7,12 H19" stroke="#6c6c6c" stroke-width="2"/></svg>
<svg class="b" style="left:865px;top:809px;" width="26" height="30" viewBox="0 0 26 30"><path d="M2,28 H24 V13 L13,2 L2,13 Z" fill="#2b2b2b" stroke="#6c6c6c" stroke-width="2"/><path d="M7,17 H19" stroke="#6c6c6c" stroke-width="2"/></svg>
<div class="clip" style="left:860px;top:72px;width:40px;height:14px;">
<svg class="b" style="left:5px;top:-20px;" width="26" height="30" viewBox="0 0 26 30"><path d="M2,2 H24 V29 H2 Z" fill="#2b2b2b" stroke="#6c6c6c" stroke-width="2"/></svg>
</div>
<div class="b" style="left:744px;top:884px;width:1220px;height:46px;background:#313335;"></div>
<div class="b" style="left:744px;top:884px;width:1220px;height:2px;background:#3b3e40;"></div>
<div class="t s" style="left:896.50px;top:891.68px;font-size:24px;line-height:31px;color:#bbbbbb;letter-spacing:1.499px;">if <span class="us" style="margin:0 -1.33px">_</span><span class="us" style="margin:0 -1.33px">_</span>name<span class="us" style="margin:0 -1.33px">_</span><span class="us" style="margin:0 -1.33px">_</span> == "<span class="us" style="margin:0 -1.33px">_</span><span class="us" style="margin:0 -1.33px">_</span>main<span class="us" style="margin:0 -1.33px">_</span><span class="us" style="margin:0 -1.33px">_</span>"</div>
<div class="b" style="left:24px;top:982px;width:1940px;height:2px;background:#323232;"></div>
<div class="t s" style="left:35.27px;top:939.04px;font-size:27px;line-height:35px;color:#bbbbbb;letter-spacing:0.433px;">Run:</div>
<svg class="b" style="left:132px;top:941px;" width="30" height="30" viewBox="0 0 30 30"><g transform="translate(0,0) scale(1.45)">
<path d="M9.9,-1 C6.5,-1 4.4,0.6 4.4,3 V6.2 H2.6 C0.4,6.2 -1,8 -1,10.4 C-1,13 0.5,15 2.8,15 H6 V11.6 C6,10.2 7,9.2 8.4,9.2 H12.6 C14.4,9.2 15.8,7.8 15.8,6 V3 C15.8,0.6 13.2,-1 9.9,-1 Z" fill="#3c3f41"/>
<path d="M9.9,0 C7.2,0 5.4,1.2 5.4,3 V5.4 H10 V6.2 H3.3 C1.4,6.2 0,7.8 0,10.2 C0,12.6 1.2,14 3,14 H5 V11.4 C5,9.6 6.4,8.2 8.2,8.2 H12.4 C13.8,8.2 14.8,7.1 14.8,5.7 V3 C14.8,1.3 12.6,0 9.9,0 Z" fill="#4a9fd4"/>
<circle cx="7.6" cy="2.7" r="0.95" fill="#2d4a5e"/>
<path d="M10.1,20 C12.8,20 14.6,18.8 14.6,17 V14.6 H10 V13.8 H16.7 C18.6,13.8 20,12.2 20,9.8 C20,7.4 18.8,6 17,6 H15 V8.6 C15,10.4 13.6,11.8 11.8,11.8 H7.6 C6.2,11.8 5.2,12.9 5.2,14.3 V17 C5.2,18.7 7.4,20 10.1,20 Z" fill="#f2c230"/>
<circle cx="12.4" cy="17.3" r="0.95" fill="#6b5a1e"/>
</g></svg>
<div class="b" style="left:153px;top:963px;width:9px;height:9px;border-radius:50%;background:#0fe00f;border:1.5px solid #2b3a2b;box-sizing:content-box;"></div>
<div class="t s" style="left:169.75px;top:939.04px;font-size:27px;line-height:35px;color:#bbbbbb;letter-spacing:0.625px;">main</div>
<svg class="b" style="left:244.6px;top:951px;" width="15" height="15" viewBox="0 0 15 15"><path d="M0.8,0.8 L14.2,14.2 M14.2,0.8 L0.8,14.2" stroke="#7a7c7e" stroke-width="1.7" fill="none"/></svg>
<div class="b" style="left:106px;top:978px;width:176px;height:6px;background:#747a80;"></div>
<div class="b" style="left:80px;top:984px;width:2px;height:370px;background:#323232;"></div>
<div class="b" style="left:138px;top:984px;width:1826px;height:370px;background:#2b2b2b;"></div>
<div class="b" style="left:136px;top:984px;width:2px;height:370px;background:#37393b;"></div>
<div class="b" style="left:32px;top:1096px;width:40px;height:2px;background:#555555;"></div>
<div class="b" style="left:32px;top:1162px;width:40px;height:2px;background:#555555;"></div>
<div class="b" style="left:32px;top:1228px;width:40px;height:2px;background:#555555;"></div>
<svg class="b" style="left:38px;top:996px;" width="32" height="32" viewBox="0 0 32 32"><path d="M17.9,11.6 A8.9,8.9 0 1,0 14.2,27.8" fill="none" stroke="#499c54" stroke-width="4.4"/><path d="M17.9,2 L28.7,9.7 L17.9,18 Z" fill="#499c54"/><rect x="16" y="20" width="10" height="10" fill="#afb1b3"/></svg>
<svg class="b" style="left:38px;top:1050px;" width="30" height="30" viewBox="0 0 30 30"><path transform="translate(0.4,0) scale(0.955)" d="M29,6.5 L23.8,11.7 L19.6,10.4 L18.3,6.2 L23.5,1 C20.6,0.1 17.2,0.8 14.9,3.1 C12.5,5.5 11.9,9 13,12 L1,24 L6,29 L18,17 C21,18.1 24.5,17.5 26.9,15.1 C29.2,12.8 29.9,9.4 29,6.5 Z" fill="#afb1b3"/></svg>
<div class="b" style="left:42px;top:1120px;width:20px;height:20px;background:#c75450;"></div>
<svg class="b" style="left:40px;top:1186px;" width="24" height="20" viewBox="0 0 24 20"><rect x="0" y="0" width="14" height="10" fill="#afb1b3"/><rect x="16" y="0" width="8" height="10" fill="#afb1b3"/><rect x="0" y="12" width="24" height="8" fill="#afb1b3"/></svg>
<svg class="b" style="left:37px;top:1247px;" width="30" height="30" viewBox="0 0 30 30"><path d="M19.1,0.6 L29.4,10.4 L21.1,15.7 L20.2,23.2 L15.2,19 L0.5,29.4 L10.9,14.8 L6.1,9.3 L13.6,9 Z" fill="#afb1b3"/></svg>
<svg class="b" style="left:99px;top:1001px;" width="22" height="26" viewBox="0 0 22 26"><path d="M11,25.1 V4 M2.2,12 L11,3.2 L19.8,12" fill="none" stroke="#5a5a5a" stroke-width="4.2"/></svg>
<svg class="b" style="left:99px;top:1053px;" width="22" height="26" viewBox="0 0 22 26"><path d="M11,1 V22 M2.2,14 L11,22.8 L19.8,14" fill="none" stroke="#5a5a5a" stroke-width="4.2"/></svg>
<svg class="b" style="left:98px;top:1105px;" width="28" height="30" viewBox="0 0 28 30"><rect x="0" y="0.8" width="24.1" height="4.3" fill="#afb1b3"/><path d="M0,13.2 H19.1 A5,5 0 0,1 19.1,23.2 H15.5" fill="none" stroke="#afb1b3" stroke-width="4.1"/><path d="M10,23.2 L16.1,17.2 V29.1 Z" fill="#afb1b3"/><rect x="0" y="21.1" width="6.2" height="4.1" fill="#afb1b3"/></svg>
<div class="b" style="left:88px;top:1148px;width:44px;height:44px;border-radius:6px;background:#5d6265;"></div>
<svg class="b" style="left:98px;top:1156px;" width="28" height="25" viewBox="0 0 28 25"><rect x="0" y="4" width="8" height="4" fill="#afb1b3"/><rect x="0" y="12" width="8" height="4" fill="#afb1b3"/><rect x="0" y="20" width="24" height="4" fill="#afb1b3"/><rect x="16" y="0" width="4" height="11" fill="#afb1b3"/><path d="M10,10 H26.2 L18.1,18.2 Z" fill="#afb1b3"/></svg>
<svg class="b" style="left:96px;top:1210px;" width="29" height="27" viewBox="0 0 29 27"><rect x="6" y="0" width="16" height="6" fill="#afb1b3"/><path d="M0,10 Q0,8 2,8 H26.2 Q28.2,8 28.2,10 V18 H0 Z" fill="#afb1b3"/><path d="M6,18 H22 V26.1 H6 Z M8.1,18 V24 H20 V18 Z" fill="#afb1b3" fill-rule="evenodd"/><rect x="24" y="10" width="2.2" height="2.2" fill="#2f3133"/></svg>
<svg class="b" style="left:100px;top:1260px;" width="21" height="27" viewBox="0 0 21 27"><rect x="6.2" y="0" width="7.9" height="2.4" fill="#afb1b3"/><rect x="0" y="2" width="20.2" height="4" fill="#afb1b3"/><path d="M2,8 H18.1 V23.2 Q18.1,26.2 15.1,26.2 H5 Q2,26.2 2,23.2 Z" fill="#afb1b3"/></svg>
<div class="clip" style="left:138px;top:984px;width:1826px;height:370px;">
<div class="t m" style="left:29.299999999999994px;top:-21.50px;font-size:33.22px;line-height:54px;"><span style="color:#ff6b68;">2022-04-07 20:17:03.967511 [W:onnxruntime:, graph.cc:3211 CleanUnusedInitializers] Removing initializer</span></div>
<div class="t m" style="left:29.299999999999994px;top:32.50px;font-size:33.22px;line-height:54px;"><span style="color:#ff6b68;">2022-04-07 20:17:03.967519 [W:onnxruntime:, graph.cc:3211 CleanUnusedInitializers] Removing initializer</span></div>
<div class="t m" style="left:29.299999999999994px;top:86.50px;font-size:33.22px;line-height:54px;"><span style="color:#ff6b68;">2022-04-07 20:17:03.967530 [W:onnxruntime:, graph.cc:3211 CleanUnusedInitializers] Removing initializer</span></div>
<div class="t m" style="left:29.299999999999994px;top:140.50px;font-size:33.22px;line-height:54px;"><span style="color:#ff6b68;">2022-04-07 20:17:03.967540 [W:onnxruntime:, graph.cc:3211 CleanUnusedInitializers] Removing initializer</span></div>
<div class="t m" style="left:29.299999999999994px;top:194.50px;font-size:33.22px;line-height:54px;"><span style="color:#ff6b68;">2022-04-07 20:17:03.967548 [W:onnxruntime:, graph.cc:3211 CleanUnusedInitializers] Removing initializer</span></div>
<div class="t m" style="left:29.299999999999994px;top:248.50px;font-size:33.22px;line-height:54px;"><span style="color:#bbbbbb;">server is running: 30.22.114.30:8089</span></div>
<div class="t m" style="left:29.299999999999994px;top:302.50px;font-size:33.22px;line-height:54px;"><span style="color:#ff6b68;">2022-04-07 20:18:28.390707 [W:onnxruntime:, execution<span class="u">_</span>frame.cc:721 VerifyOutputSizes] Expected shape</span></div>
<div class="t m" style="left:29.299999999999994px;top:357.50px;font-size:33.22px;line-height:54px;"><span style="color:#ff6b68;">2022-04-07 20:18:28.390758 [W:onnxruntime:, execution<span class="u">_</span>frame.cc:721 VerifyOutputSizes] Expected shape</span></div>
</div>
</div></body></html>
